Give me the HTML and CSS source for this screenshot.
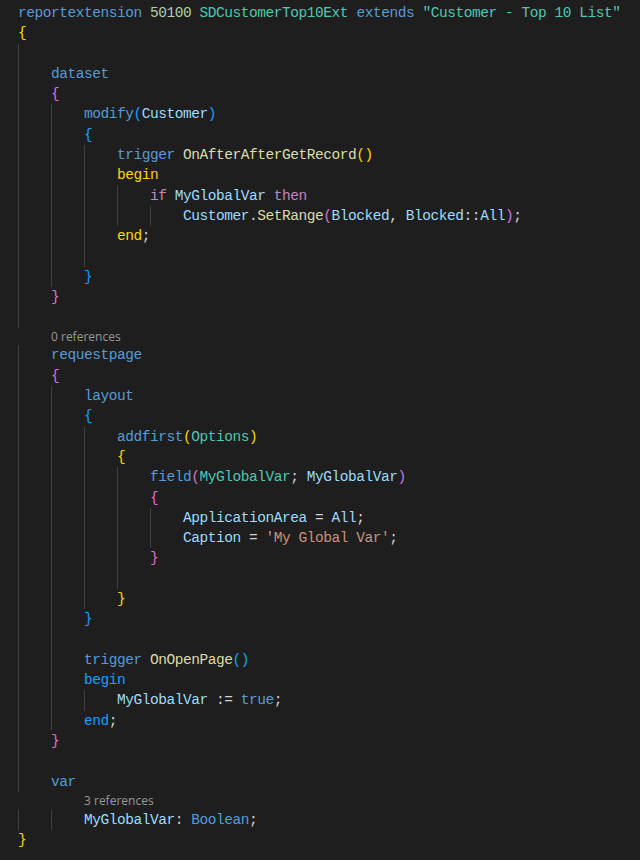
FILE: index.html
```html
<!DOCTYPE html>
<html>
<head>
<meta charset="utf-8">
<link rel="stylesheet" href="styles.css">
</head>
<body>
<div class="editor">
<div class="ln"><span class="t"><span class="k">reportextension</span> <span class="n">50100</span> <span class="ty">SDCustomerTop10Ext</span> <span class="k">extends</span> <span class="ty">"Customer - Top 10 List"</span></span></div>
<div class="ln"><span class="t b1">{</span></div>
<div class="ln"><span class="g"></span></div>
<div class="ln"><span class="g"></span><span class="t k">dataset</span></div>
<div class="ln"><span class="g"></span><span class="t b2">{</span></div>
<div class="ln"><span class="g"></span><span class="g"></span><span class="t"><span class="k">modify</span><span class="b3">(</span><span class="v">Customer</span><span class="b3">)</span></span></div>
<div class="ln"><span class="g"></span><span class="g"></span><span class="t b3">{</span></div>
<div class="ln"><span class="g"></span><span class="g"></span><span class="g"></span><span class="t"><span class="k">trigger</span> <span class="f">OnAfterAfterGetRecord</span><span class="b1">()</span></span></div>
<div class="ln"><span class="g"></span><span class="g"></span><span class="g"></span><span class="t b1">begin</span></div>
<div class="ln"><span class="g"></span><span class="g"></span><span class="g"></span><span class="g"></span><span class="t"><span class="c">if</span> <span class="v">MyGlobalVar</span> <span class="c">then</span></span></div>
<div class="ln"><span class="g"></span><span class="g"></span><span class="g"></span><span class="g"></span><span class="g"></span><span class="t"><span class="v">Customer</span><span class="p">.</span><span class="f">SetRange</span><span class="b2">(</span><span class="v">Blocked</span><span class="p">, </span><span class="v">Blocked</span><span class="p">::</span><span class="v">All</span><span class="b2">)</span><span class="p">;</span></span></div>
<div class="ln"><span class="g"></span><span class="g"></span><span class="g"></span><span class="t"><span class="b1">end</span><span class="p">;</span></span></div>
<div class="ln"><span class="g"></span><span class="g"></span><span class="g"></span></div>
<div class="ln"><span class="g"></span><span class="g"></span><span class="t b3">}</span></div>
<div class="ln"><span class="g"></span><span class="t b2">}</span></div>
<div class="ln"><span class="g"></span></div>
<div class="lens lens1">0 references</div>
<div class="ln"><span class="g"></span><span class="t k">requestpage</span></div>
<div class="ln"><span class="g"></span><span class="t b2">{</span></div>
<div class="ln"><span class="g"></span><span class="g"></span><span class="t k">layout</span></div>
<div class="ln"><span class="g"></span><span class="g"></span><span class="t b3">{</span></div>
<div class="ln"><span class="g"></span><span class="g"></span><span class="g"></span><span class="t"><span class="k">addfirst</span><span class="b1">(</span><span class="ty">Options</span><span class="b1">)</span></span></div>
<div class="ln"><span class="g"></span><span class="g"></span><span class="g"></span><span class="t b1">{</span></div>
<div class="ln"><span class="g"></span><span class="g"></span><span class="g"></span><span class="g"></span><span class="t"><span class="k">field</span><span class="b2">(</span><span class="ty">MyGlobalVar</span><span class="p">; </span><span class="v">MyGlobalVar</span><span class="b2">)</span></span></div>
<div class="ln"><span class="g"></span><span class="g"></span><span class="g"></span><span class="g"></span><span class="t b2">{</span></div>
<div class="ln"><span class="g"></span><span class="g"></span><span class="g"></span><span class="g"></span><span class="g"></span><span class="t"><span class="v">ApplicationArea</span><span class="p"> = </span><span class="v">All</span><span class="p">;</span></span></div>
<div class="ln"><span class="g"></span><span class="g"></span><span class="g"></span><span class="g"></span><span class="g"></span><span class="t"><span class="v">Caption</span><span class="p"> = </span><span class="s">'My Global Var'</span><span class="p">;</span></span></div>
<div class="ln"><span class="g"></span><span class="g"></span><span class="g"></span><span class="g"></span><span class="t b2">}</span></div>
<div class="ln"><span class="g"></span><span class="g"></span><span class="g"></span><span class="g"></span></div>
<div class="ln"><span class="g"></span><span class="g"></span><span class="g"></span><span class="t b1">}</span></div>
<div class="ln"><span class="g"></span><span class="g"></span><span class="t b3">}</span></div>
<div class="ln"><span class="g"></span><span class="g"></span></div>
<div class="ln"><span class="g"></span><span class="g"></span><span class="t"><span class="k">trigger</span> <span class="f">OnOpenPage</span><span class="b3">()</span></span></div>
<div class="ln"><span class="g"></span><span class="g"></span><span class="t b3">begin</span></div>
<div class="ln"><span class="g"></span><span class="g"></span><span class="g"></span><span class="t"><span class="v">MyGlobalVar</span><span class="p"> := </span><span class="k">true</span><span class="p">;</span></span></div>
<div class="ln"><span class="g"></span><span class="g"></span><span class="t"><span class="b3">end</span><span class="p">;</span></span></div>
<div class="ln"><span class="g"></span><span class="t b2">}</span></div>
<div class="ln"><span class="g"></span></div>
<div class="ln"><span class="g"></span><span class="t k">var</span></div>
<div class="lens lens2">3 references</div>
<div class="ln"><span class="g"></span><span class="g"></span><span class="t"><span class="v">MyGlobalVar</span><span class="p">: </span><span class="k">Boolean</span><span class="p">;</span></span></div>
<div class="ln"><span class="t b1">}</span></div>
</div>
</body>
</html>
```

FILE: styles.css
```css
html, body {
  margin: 0;
  padding: 0;
  background: #1e1e1e;
}
.editor {
  padding: 3px 0 0 18px;
  height: 857px;
  overflow: hidden;
  font-family: "Liberation Mono", "DejaVu Sans Mono", monospace;
  font-size: 14.5px;
  letter-spacing: -0.45px;
  color: #d4d4d4;
}
.ln {
  display: flex;
  height: 20.3px;
  align-items: stretch;
}
.g {
  flex: 0 0 33px;
  width: 33px;
  box-sizing: border-box;
  border-left: 1px solid #404040;
}
.t {
  white-space: pre;
  line-height: 20.3px;
}
.lens {
  height: 17.7px;
  line-height: 17.7px;
  font-family: "Open Sans", "Noto Sans", sans-serif;
  font-size: 12px;
  letter-spacing: 0;
  color: #999999;
}
.lens1 { padding-left: 33px; }
.lens2 { padding-left: 66px; }
.k { color: #569cd6; }
.n { color: #b5cea8; }
.ty { color: #4ec9b0; }
.f { color: #dcdcaa; }
.v { color: #9cdcfe; }
.c { color: #c586c0; }
.p { color: #d4d4d4; }
.s { color: #ce9178; }
.b1 { color: #ffd700; }
.b2 { color: #da70d6; }
.b3 { color: #179fff; }
```
